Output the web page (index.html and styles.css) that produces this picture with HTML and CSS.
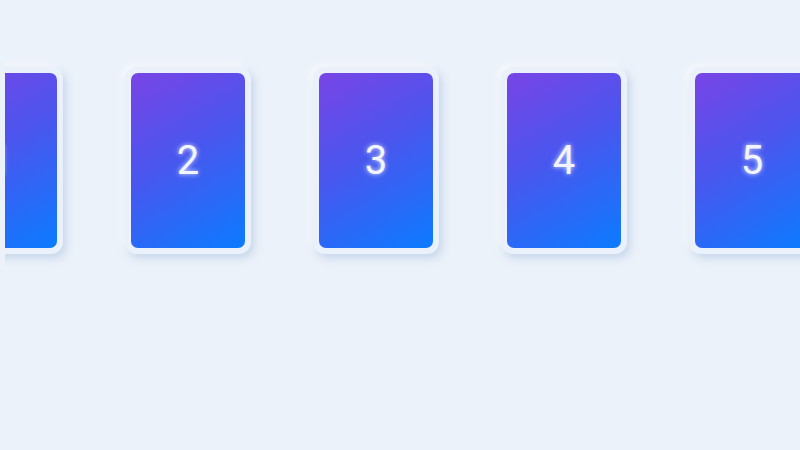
FILE: index.html
```html
<!DOCTYPE html>
<html lang="en">
<head>
    <meta charset="UTF-8">
    <title>Cards</title>
    <link rel="stylesheet" href="styles.css">
</head>
<body>
<div class="stage">
    <ul class="track">
        <li class="card"><div class="face">1</div></li>
        <li class="card"><div class="face">2</div></li>
        <li class="card"><div class="face">3</div></li>
        <li class="card"><div class="face">4</div></li>
        <li class="card"><div class="face">5</div></li>
    </ul>
</div>
</body>
</html>
```

FILE: styles.css
```css
*{
    margin: 0;
    padding: 0;
}
html,body{
    height: 100%;
}
body{
    background: #ecf2fa;
    font-family: Roboto, sans-serif;
    overflow: hidden;
}
.stage{
    margin-left: 5px;
    padding-top: 67px;
    overflow: hidden;
    height: 210px;
}
ul{
    list-style: none;
}
.track{
    display: flex;
    gap: 62px;
    margin-left: -68px;
}
.card{
    flex: none;
    width: 114px;
    height: 175px;
    padding: 6px;
    border-radius: 12px;
    background: #eaf1fb;
    box-shadow: 3px 4px 8px rgba(160, 185, 220, .5), -3px -3px 6px rgba(255, 255, 255, .7);
}
.face{
    height: 100%;
    border-radius: 7px;
    background: linear-gradient(150deg, #7944e6 0%, #4a56ee 45%, #0b7bff 100%);
    color: #f2f5ff;
    font-size: 40px;
    display: flex;
    align-items: center;
    justify-content: center;
    text-shadow: 0 0 5px rgba(255, 255, 255, .85);
}
```
